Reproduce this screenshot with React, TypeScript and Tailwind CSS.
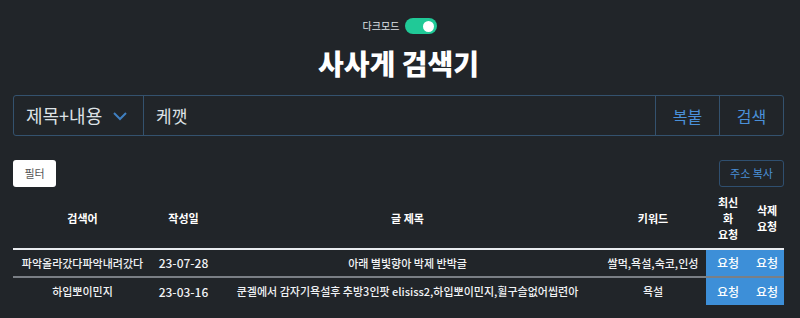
const FONT = { fontFamily: '"Noto Sans CJK KR", "Noto Sans", sans-serif' };

type Row = { term: string; date: string; title: string; keywords: string };

const rows: Row[] = [
  { term: "파악올라갔다파악내려갔다", date: "23-07-28", title: "아래 별빛향아 박제 반박글", keywords: "쌀먹,욕설,숙코,인성" },
  {
    term: "하입뽀이민지",
    date: "23-03-16",
    title: "쿤겔에서 감자기욕설후 추방3인팟 elisiss2,하입뽀이민지,휠구슬없어씹련아",
    keywords: "욕설",
  },
];

function Toggle() {
  return (
    <div className="flex h-4 w-8 items-center justify-end rounded-full bg-[#20c997] px-[3px]">
      <div className="h-[11px] w-[11px] rounded-full bg-white" />
    </div>
  );
}

export default function App() {
  return (
    <div className="h-[318px] w-full overflow-hidden bg-[#212529] pl-[13px] pr-[16px] text-[#dee2e6]" style={FONT}>
      {/* dark mode switch */}
      <div className="flex items-center justify-center gap-[6px] pt-[18px] pl-[3px]">
        <span className="text-[10px] leading-4 text-[#dee2e6]">다크모드</span>
        <Toggle />
      </div>

      <h1 className="mt-[11px] text-center text-[28px] font-extrabold leading-9 text-white">사사게 검색기</h1>

      {/* search bar */}
      <div className="mt-[14px] flex h-[41px] rounded-[3px] border border-[#34526e]">
        <div className="flex w-[130px] items-center gap-[10px] border-r border-[#34526e] pl-3">
          <span className="text-[18px] text-[#dee2e6]">제목+내용</span>
          <svg width="16" height="10" viewBox="0 0 16 10" fill="none" stroke="#3f7fc0" strokeWidth="2">
            <path d="M2 2l6 6 6-6" />
          </svg>
        </div>
        <div className="flex flex-1 items-center pl-3 text-[17px] text-[#dee2e6]">케깻</div>
        <div className="flex w-16 items-center justify-center border-l border-[#34526e] text-[16px] text-[#4a90d9]">
          복붙
        </div>
        <div className="flex w-16 items-center justify-center border-l border-[#34526e] text-[16px] text-[#4a90d9]">
          검색
        </div>
      </div>

      {/* buttons */}
      <div className="mt-[24px] flex items-center justify-between">
        <button className="h-[27px] w-[43px] rounded-[3px] bg-white text-[11px] text-[#555]">필터</button>
        <button className="h-[27px] w-[65px] rounded-[3px] border border-[#2f4f6f] text-[11px] text-[#4a90d9]">
          주소 복사
        </button>
      </div>

      {/* results */}
      <table className="mt-[2px] w-full table-fixed border-collapse text-[11px]">
        <colgroup>
          <col className="w-[139px]" />
          <col className="w-[63px]" />
          <col />
          <col className="w-[106px]" />
          <col className="w-[44px]" />
          <col className="w-[34px]" />
        </colgroup>
        <thead>
          <tr className="border-b-2 border-[#e9ecef] font-bold leading-[16px] text-white">
            <th className="pt-[5px] pb-[6px]">검색어</th>
            <th className="pt-[5px] pb-[6px]">작성일</th>
            <th className="pt-[5px] pb-[6px]">글 제목</th>
            <th className="pt-[5px] pb-[6px]">키워드</th>
            <th className="pt-[5px] pb-[6px]">
              최신
              <br />화<br />
              요청
            </th>
            <th className="pt-[5px] pb-[6px]">
              삭제
              <br />
              요청
            </th>
          </tr>
        </thead>
        <tbody className="font-medium text-[#f1f3f5]">
          {rows.map((r, i) => (
            <tr key={i} className={i === 0 ? "border-b-2 border-[#7a7f85]" : ""}>
              <td className="h-[28px] whitespace-nowrap text-center">{r.term}</td>
              <td className="text-center text-[12px]">{r.date}</td>
              <td className="whitespace-nowrap text-center">{r.title}</td>
              <td className="whitespace-nowrap text-center">{r.keywords}</td>
              <td className="bg-[#3d8fd8] text-center text-[12px] text-white">요청</td>
              <td className="bg-[#3d8fd8] text-center text-[12px] text-white">요청</td>
            </tr>
          ))}
        </tbody>
      </table>
    </div>
  );
}
